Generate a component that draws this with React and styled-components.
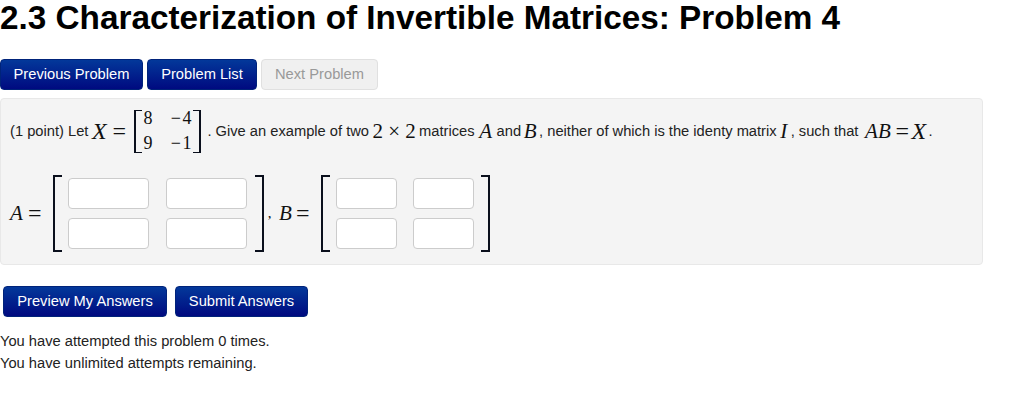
import React from 'react';
import styled, { createGlobalStyle } from 'styled-components';

const GlobalStyle = createGlobalStyle`
  body {
    margin: 0;
    background: #fff;
    color: #222;
    font-family: "Liberation Sans", Arial, sans-serif;
    font-size: 14.7px;
  }
`;

const Page = styled.div`
  width: 1018px;
  height: 403px;
  overflow: hidden;
`;

const Title = styled.h1`
  margin: 0;
  height: 59px;
  font-size: 33.3px;
  line-height: 36px;
  font-weight: bold;
  color: #000;
  white-space: nowrap;
`;

const ButtonRow = styled.div`
  display: flex;
  gap: ${(p) => p.$gap}px;
  padding-left: ${(p) => p.$left || 0}px;
  margin-top: ${(p) => p.$top || 0}px;
`;

const Button = styled.button`
  box-sizing: border-box;
  height: 31px;
  width: ${(p) => p.$width}px;
  padding: 0 0 2px;
  border-radius: 4px;
  border: 1px solid ${(p) => (p.disabled ? '#e0e0e0' : '#00237a')};
  background: ${(p) =>
    p.disabled ? '#f0f0f0' : 'linear-gradient(to bottom, #03389a, #000a80)'};
  color: ${(p) => (p.disabled ? '#999' : '#fff')};
  font-family: inherit;
  font-size: 14.7px;
`;

const Well = styled.div`
  box-sizing: border-box;
  width: 983px;
  height: 167px;
  margin-top: 8px;
  padding: 6px 9px 0;
  background: #f4f4f4;
  border: 1px solid #e8e8e8;
  border-radius: 4px;
`;

const Statement = styled.div`
  display: flex;
  align-items: center;
  height: 52px;
  white-space: pre;
  line-height: 20px;
`;

const Math = styled.span`
  flex: none;
  width: ${(p) => p.$width}px;
  margin-left: ${(p) => p.$before || 0}px;
  margin-right: ${(p) => p.$after || 0}px;
  font-family: "Liberation Serif", "Times New Roman", serif;
  font-size: ${(p) => p.$size || 21}px;
  font-style: ${(p) => (p.$italic ? 'italic' : 'normal')};
  text-align: ${(p) => p.$align || 'center'};
  color: #111;
`;

const Bracketed = styled.div`
  position: relative;
  flex: none;
  display: grid;
  box-sizing: border-box;
  grid-template-columns: repeat(2, auto);
  justify-content: space-between;
  align-items: center;
  align-content: center;
`;

const SmallMatrix = styled(Bracketed)`
  width: 67px;
  height: 43px;
  margin-right: 6px;
  padding: 0 10px 0 9px;
  font-family: "Liberation Serif", "Times New Roman", serif;
  font-size: 18px;
  color: #111;
  text-align: right;
  line-height: 25px;
`;

const InputMatrix = styled(Bracketed)`
  width: ${(p) => p.$width}px;
  height: 77px;
  padding: 3px ${(p) => p.$right}px 3px 15px;
  row-gap: 9px;
`;

const Side = styled.span`
  position: absolute;
  top: 0;
  bottom: 0;
  width: ${(p) => p.$w}px;
  ${(p) => p.$side}: 0;
  border: solid #0a0f1c;
  border-width: ${(p) => p.$tick}px 0;
  border-${(p) => p.$side}-width: 2px;
`;

const Cell = styled.input`
  box-sizing: border-box;
  display: block;
  width: ${(p) => p.$width}px;
  height: 31px;
  padding: 0;
  background: #fff;
  border: 1px solid #ccc;
  border-radius: 4px;
`;

const AnswerRow = styled.div`
  display: flex;
  align-items: center;
  height: 77px;
  margin-top: 18px;
`;

const Attempts = styled.div`
  margin-top: 13px;
  color: #222;
  line-height: 22px;
`;

const Matrix = ({ width, cell, right }) => (
  <InputMatrix $width={width} $right={right}>
    <Side $side="left" $w={7} $tick={2} />
    <Cell $width={cell} />
    <Cell $width={cell} />
    <Cell $width={cell} />
    <Cell $width={cell} />
    <Side $side="right" $w={7} $tick={2} />
  </InputMatrix>
);

export default function App() {
  return (
    <Page>
      <GlobalStyle />
      <Title>2.3 Characterization of Invertible Matrices: Problem 4</Title>
      <ButtonRow $gap={4}>
        <Button $width={143}>Previous Problem</Button>
        <Button $width={110}>Problem List</Button>
        <Button $width={117} disabled>Next Problem</Button>
      </ButtonRow>
      <Well>
        <Statement>
          (1 point) Let
          <Math $italic $size={24} $width={22}>X</Math>
          <Math $size={24} $width={18} $after={6}>=</Math>
          <SmallMatrix>
            <Side $side="left" $w={6} $tick={1} />
            <span>8</span>
            <span>−&#8202;4</span>
            <span>9</span>
            <span>−&#8202;1</span>
            <Side $side="right" $w={6} $tick={1} />
          </SmallMatrix>
          . Give an example of two
          <Math $width={50}>2 × 2</Math>
          matrices
          <Math $italic $width={22}>A</Math>
          and
          <Math $italic $width={18}>B</Math>
          , neither of which is the identy matrix
          <Math $italic $width={14}>I</Math>
          , such that
          <Math $italic $before={2} $width={35}>AB</Math>
          <Math $size={24} $width={14}>=</Math>
          <Math $italic $size={24} $width={19}>X</Math>
          .
        </Statement>
        <AnswerRow>
          <Math $italic $width={18} $align="left">A</Math>
          <Math $size={24} $width={25} $align="left">=</Math>
          <Matrix width={211} cell={81} right={17} />
          <Math $size={15} $width={15} $align="left">&nbsp;,</Math>
          <Math $italic $width={17} $align="left">B</Math>
          <Math $size={24} $width={25} $align="left">=</Math>
          <Matrix width={169} cell={61} right={16} />
        </AnswerRow>
      </Well>
      <ButtonRow $gap={8} $left={3} $top={21}>
        <Button $width={164}>Preview My Answers</Button>
        <Button $width={133}>Submit Answers</Button>
      </ButtonRow>
      <Attempts>
        You have attempted this problem 0 times.
        <br />
        You have unlimited attempts remaining.
      </Attempts>
    </Page>
  );
}
